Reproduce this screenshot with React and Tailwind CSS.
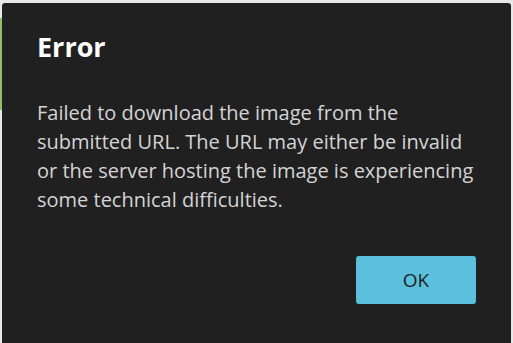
export default function App() {
  return (
    <div className="w-[513px] h-[343px] overflow-hidden bg-[#e8e8e8] flex pt-[3px] pr-[2px]">
      {/* sliver of the page behind the dialog */}
      <div className="w-[2px] shrink-0 pt-[15px]">
        <div className="h-[92px] bg-[#8fbf6a]" />
      </div>
      {/* Dialog */}
      <div
        className="flex-1 h-[360px] bg-[#202020] rounded-[3px] pl-[35px] pr-[35px]"
        style={{ fontFamily: '"Open Sans", "Noto Sans", sans-serif' }}
      >
        <h1 className="pt-[26px] text-[27px] leading-[36px] font-bold text-white">Error</h1>
        <p className="mt-[33px] mr-[-6px] text-[20px] leading-[29px] text-[#d4d4d4]">
          Failed to download the image from the submitted URL. The URL may either be invalid or the server hosting the
          image is experiencing some technical difficulties.
        </p>
        <div className="flex justify-end mt-[42px]">
          <button className="w-[120px] h-[48px] rounded-[3px] bg-[#5bc0de] text-[#222] text-[19px]">OK</button>
        </div>
      </div>
    </div>
  );
}
